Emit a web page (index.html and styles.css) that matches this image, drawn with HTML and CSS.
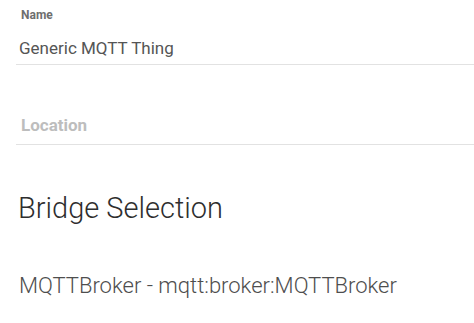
FILE: index.html
```html
<!DOCTYPE html>
<html>
<head>
<meta charset="utf-8">
<link rel="stylesheet" href="styles.css">
</head>
<body>
<div class="page">
  <div class="field">
    <div class="label">Name</div>
    <div class="value">Generic MQTT Thing</div>
  </div>
  <div class="field field-empty">
    <div class="placeholder">Location</div>
  </div>
  <h2 class="section-title">Bridge Selection</h2>
  <div class="bridge-item">MQTTBroker - mqtt:broker:MQTTBroker</div>
</div>
</body>
</html>
```
FILE: styles.css
```css
html, body {
  margin: 0;
  padding: 0;
  background: #ffffff;
  font-family: Roboto, "Liberation Sans", sans-serif;
}
.page {
  padding: 8px 0 0 16px;
}
.field {
  border-bottom: 1px solid #e2e2e2;
}
.label {
  font-size: 12px;
  font-weight: 700;
  color: #6e6e6e;
  line-height: 14px;
  padding-left: 5px;
}
.value {
  font-size: 17px;
  color: #555555;
  line-height: 20px;
  padding: 16px 0 6px 3px;
}
.field-empty {
  margin-top: 46px;
}
.placeholder {
  font-size: 17px;
  font-weight: 700;
  color: #bdbdbd;
  line-height: 20px;
  padding: 4px 0 9px 5px;
}
.section-title {
  margin: 46px 0 0 0;
  font-size: 29px;
  font-weight: 300;
  color: #2e2e2e;
  line-height: 34px;
  padding-left: 2px;
}
.bridge-item {
  margin-top: 48px;
  font-size: 22px;
  font-weight: 300;
  color: #4e4e4e;
  line-height: 26px;
  padding-left: 3px;
}
```
